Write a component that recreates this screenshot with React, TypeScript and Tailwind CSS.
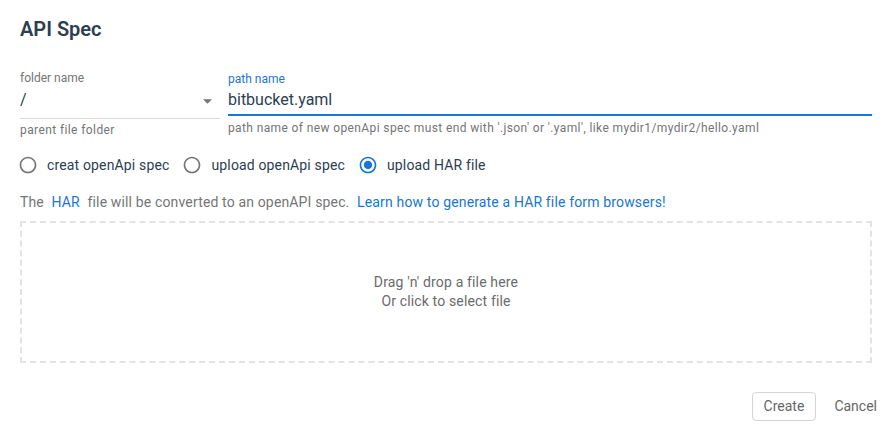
import React from "react";

const BLUE = "#1976d2";

function Radio({ label, checked }: { label: string; checked?: boolean }) {
  return (
    <label className="mr-[13px] flex cursor-pointer items-center">
      <svg
        viewBox="0 0 24 24"
        className="h-[20px] w-[20px]"
        fill={checked ? BLUE : "#757575"}
      >
        <path d="M12 2C6.48 2 2 6.48 2 12s4.48 10 10 10 10-4.48 10-10S17.52 2 12 2zm0 18c-4.42 0-8-3.58-8-8s3.58-8 8-8 8 3.58 8 8-3.58 8-8 8z" />
        {checked ? (
          <path d="M12 7c-2.76 0-5 2.24-5 5s2.24 5 5 5 5-2.24 5-5-2.24-5-5-5z" />
        ) : null}
      </svg>
      <span className="ml-[9px] text-[14px] leading-5 tracking-[0.15px] text-[#2c3e50]">
        {label}
      </span>
    </label>
  );
}

export default function App() {
  return (
    <div className="h-[430px] w-[892px] bg-white font-['Roboto',sans-serif] text-[#2c3e50]">
      <div className="px-5 pt-[17px]">
        <h2 className="text-[20px] font-semibold leading-6 text-[#2c3e50]">
          API Spec
        </h2>

        <div className="mt-[29px] flex gap-2">
          <div className="w-[200px] shrink-0">
            <div className="text-[12px] leading-4 text-[#757575]">
              folder name
            </div>
            <div className="mt-[2px] flex items-center justify-between border-b border-[#d9d9d9] pb-[6px]">
              <span className="text-[16px] leading-6">/</span>
              <svg viewBox="0 0 10 5" className="mr-[8px] mt-[3px] h-[5px] w-[9px]">
                <path d="M0 0l5 5 5-5z" fill="#757575" />
              </svg>
            </div>
            <div className="mt-[3px] text-[12px] leading-4 tracking-[0.4px] text-[#757575]">
              parent file folder
            </div>
          </div>

          <div className="flex-1">
            <div className="mt-[1px] text-[12px] leading-4" style={{ color: BLUE }}>
              path name
            </div>
            <div className="mt-[1px] border-b-2 border-[#1976d2] pb-[2px]">
              <span className="text-[16px] leading-6">bitbucket.yaml</span>
            </div>
            <div className="mt-[4px] text-[12px] leading-4 tracking-[0.38px] text-[#757575]">
              path name of new openApi spec must end with '.json' or '.yaml',
              like mydir1/mydir2/hello.yaml
            </div>
          </div>
        </div>

        <div className="mt-[17px] -ml-[2px] flex items-center">
          <Radio label="creat openApi spec" />
          <Radio label="upload openApi spec" />
          <Radio label="upload HAR file" checked />
        </div>

        <p className="mt-[17px] text-[14px] leading-5 tracking-[0.15px] text-[#757575]">
          The <a className="mx-[4px] text-[#1976d2]">HAR</a> file will be
          converted to an openAPI spec.{" "}
          <a className="ml-[4px] text-[#1976d2]">
            Learn how to generate a HAR file form browsers!
          </a>
        </p>

        <div className="mt-[9px] flex h-[142px] cursor-pointer flex-col items-center justify-center border-2 border-dashed border-[#e3e3e3] text-[14px] leading-[19px] tracking-[0.15px] text-[#6b6b6b]">
          <span>Drag 'n' drop a file here</span>
          <span>Or click to select file</span>
        </div>
      </div>

      <div className="mt-[29px] flex justify-end gap-[6px] pr-[3px]">
        <button className="h-[29px] rounded-[4px] border border-[#d4d4d4] px-[11px] text-[14px] text-[#666]">
          Create
        </button>
        <button className="h-[29px] px-3 text-[14px] text-[#666]">
          Cancel
        </button>
      </div>
    </div>
  );
}
